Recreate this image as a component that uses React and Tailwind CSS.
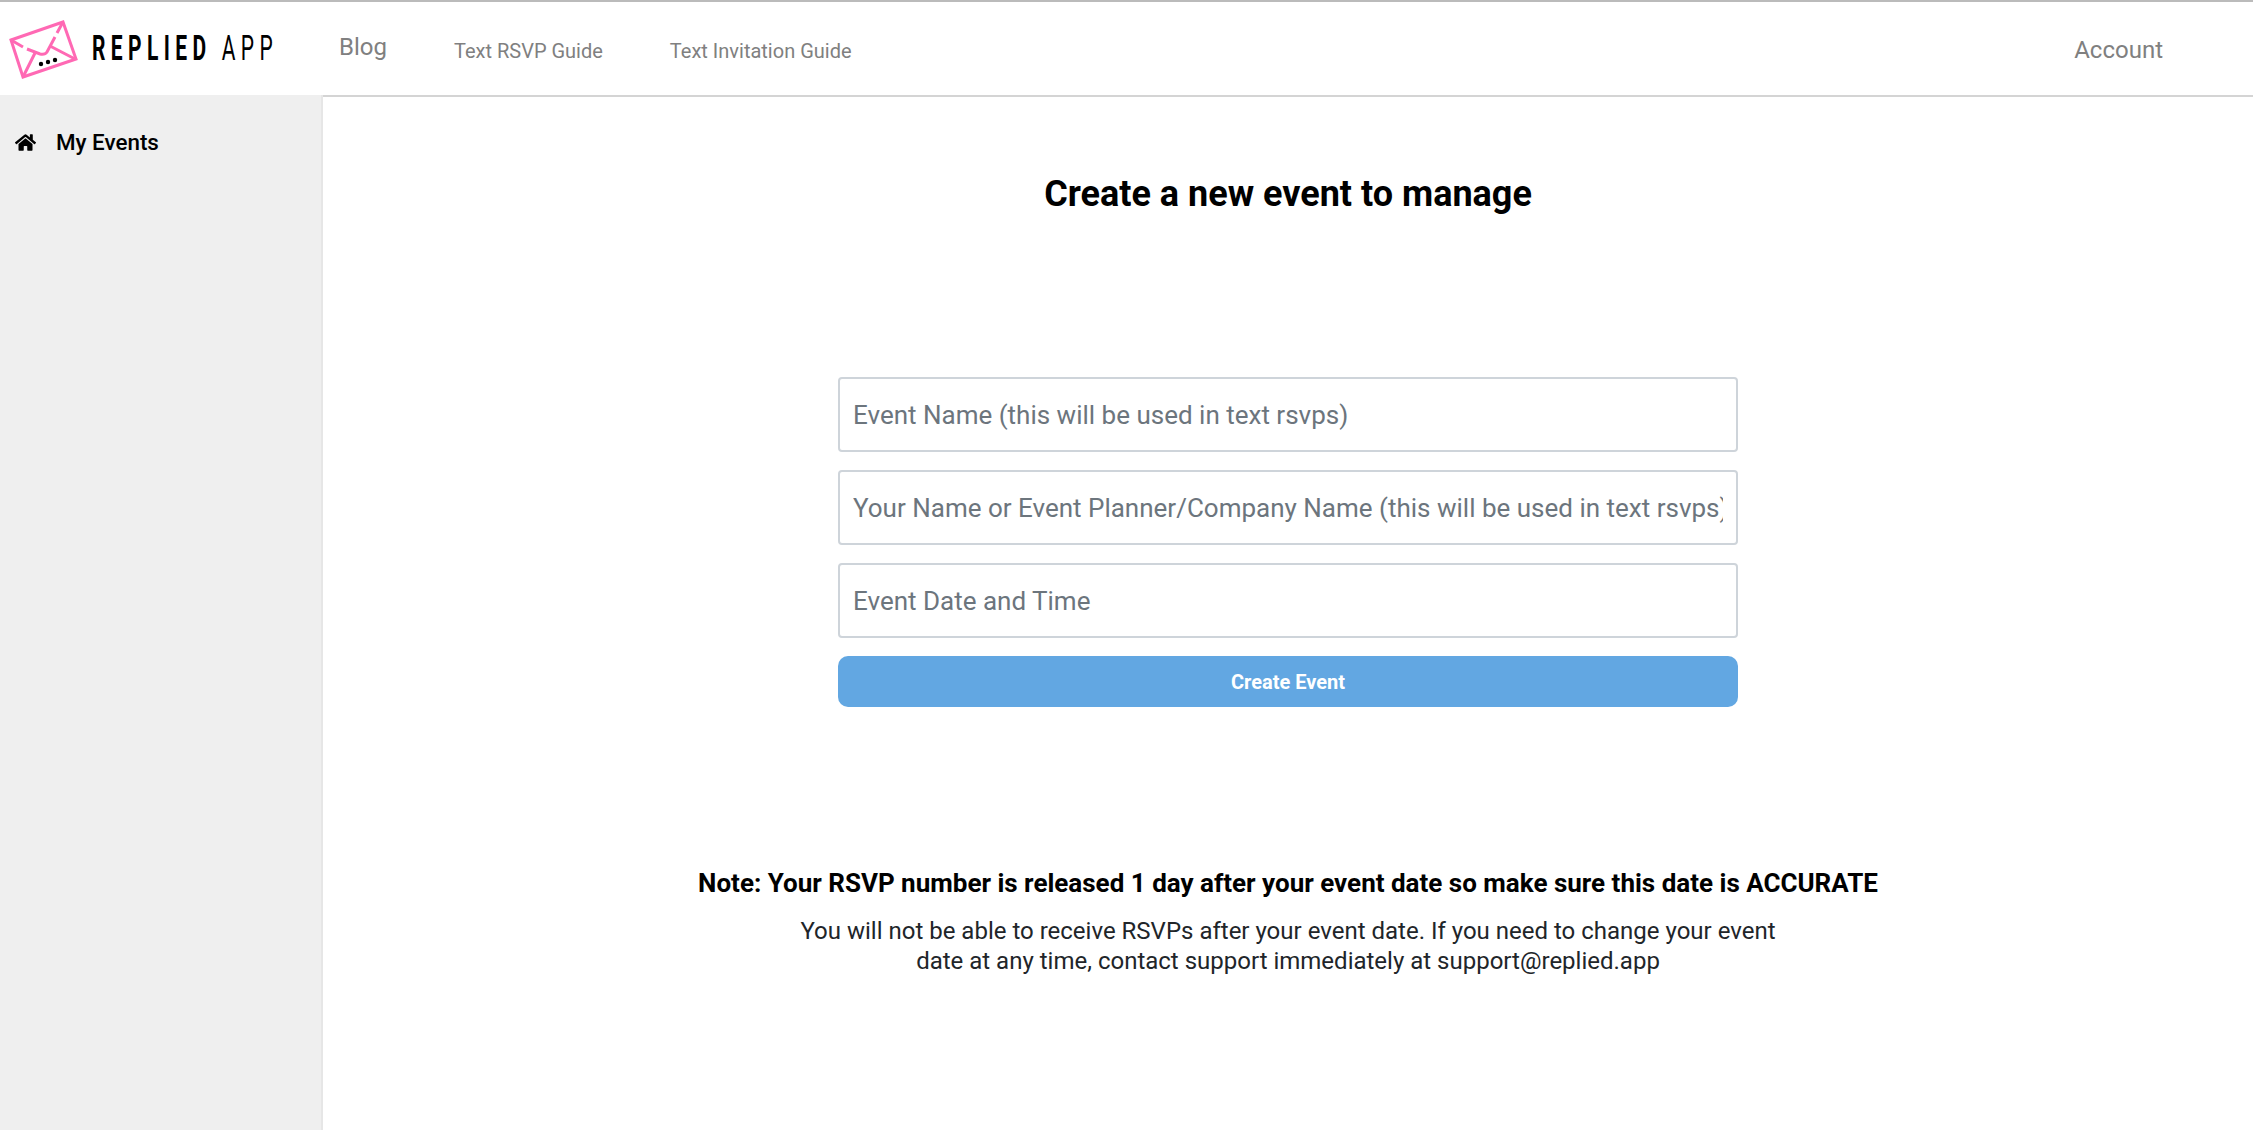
import { FaHome } from "react-icons/fa";

const fields = [
  "Event Name (this will be used in text rsvps)",
  "Your Name or Event Planner/Company Name (this will be used in text rsvps)",
  "Event Date and Time",
];

function Logo() {
  return (
    <svg width="70" height="60" viewBox="0 0 70 60" fill="none" stroke="#ff69b4" strokeWidth="3" className="shrink-0">
      <path d="M2 21 L54 3 L67 40 L14 58 Z" />
      <path d="M2 21 L14 28 M18 30 L31 35 Q36 36 38 33 L46 18 M48 14 L54 3" />
      <path d="M14 58 L26 34 M41 27 L66 40" />
      <circle cx="32" cy="45" r="2.2" fill="#000" stroke="none" />
      <circle cx="39" cy="43" r="2.2" fill="#000" stroke="none" />
      <circle cx="46" cy="41" r="2.2" fill="#000" stroke="none" />
    </svg>
  );
}

export default function App() {
  return (
    <div className="h-[1130px] flex flex-col bg-white font-['Roboto',sans-serif] overflow-hidden">
      <div className="h-[2px] bg-[#bbbbbb]" />
      <header className="h-[93px] shrink-0 flex items-center pl-[9px]">
        <Logo />
        <div className="ml-[13px] w-[186px] shrink-0 flex items-center">
          <span className="block origin-left scale-x-[.6] text-[35px] leading-none text-black whitespace-nowrap">
            <span className="font-bold tracking-[9px]">REPLIED</span>
            <span className="ml-[17px] tracking-[9px]">APP</span>
          </span>
        </div>
        <a className="ml-[61px] -mt-[4px] text-[24px] text-[#808080]">Blog</a>
        <a className="ml-[67px] mt-[5px] text-[20px] text-[#808080]">Text RSVP Guide</a>
        <a className="ml-[67px] mt-[5px] text-[20px] text-[#808080]">Text Invitation Guide</a>
        <a className="ml-auto mr-[90px] mt-[2px] text-[24px] text-[#808080]">Account</a>
      </header>
      <div className="flex flex-1 min-h-0">
        <aside className="w-[323px] shrink-0 bg-[#efefef] border-r-2 border-[#e6e6e6] pt-[32px] pl-[15px]">
          <div className="flex items-center h-[30px]">
            <FaHome className="text-[21px] text-black" />
            <span className="ml-[20px] mt-[2px] text-[22.4px] font-medium text-black">My Events</span>
          </div>
        </aside>
        <main className="flex-1 flex flex-col items-center border-t-2 border-[#d4d4d4]">
          <h1 className="mt-[74px] text-[36px] leading-[46px] font-bold text-black">Create a new event to manage</h1>
          <form className="mt-[160px] w-[900px] flex flex-col gap-[18px]">
            {fields.map((f) => (
              <input
                key={f}
                placeholder={f}
                className="h-[75px] w-full rounded-[4px] border-2 border-[#ced4da] bg-white px-[13px] text-[26px] text-[#495057] placeholder:text-[#6c757d] outline-none"
              />
            ))}
            <button type="button" className="h-[51px] rounded-[10px] bg-[#62a7e2] text-[20px] font-bold text-white">
              Create Event
            </button>
          </form>
          <p className="mt-[158px] text-[26px] leading-[36px] font-bold text-black">
            Note: Your RSVP number is released 1 day after your event date so make sure this date is ACCURATE
          </p>
          <p className="mt-[15px] w-[1000px] text-center text-[24px] leading-[30px] text-[#212529]">
            You will not be able to receive RSVPs after your event date. If you need to change your event
            <br />
            date at any time, contact support immediately at support@replied.app
          </p>
        </main>
      </div>
    </div>
  );
}
